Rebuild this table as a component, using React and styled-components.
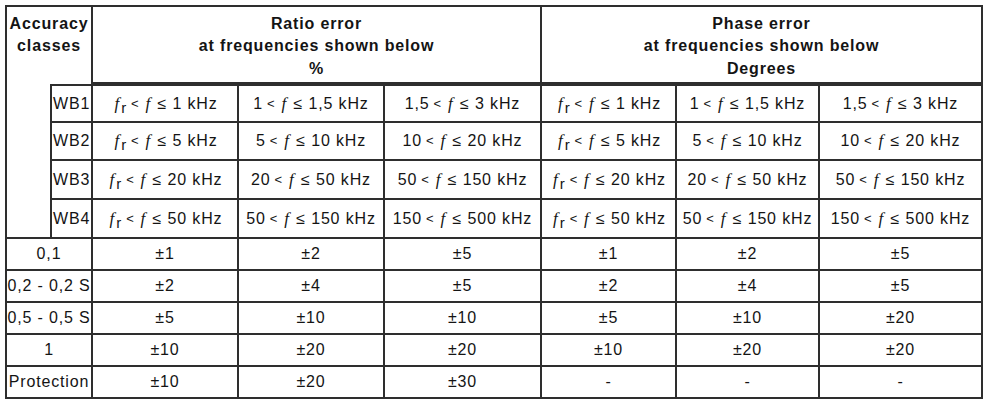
import React from "react";
import styled, { createGlobalStyle } from "styled-components";

const Global = createGlobalStyle`
  html, body { margin: 0; padding: 0; background: #ffffff; }
  body { font-family: "Liberation Sans", Arial, sans-serif; color: #141414; }
`;

const Page = styled.div`
  padding: 5px 0 0 5px;
`;

const Grid = styled.div`
  display: grid;
  width: max-content;
  grid-template-columns: 45px 41px 146px 146px 157px 135px 143px 163px;
  grid-template-rows: 77px 39px 38px 39px 39px repeat(5, 32px);
  border-left: 2px solid #2e2e2e;
  border-top: 2px solid #2e2e2e;
`;

const Cell = styled.div`
  box-sizing: border-box;
  grid-column: ${(p) => p.$col};
  grid-row: ${(p) => p.$row};
  border-right: 2px solid #2e2e2e;
  border-bottom: ${(p) => (p.$noBottom ? "none" : "2px solid #2e2e2e")};
  border-top: ${(p) => (p.$top ? "2px solid #2e2e2e" : "none")};
  display: flex;
  align-items: center;
  justify-content: ${(p) => (p.$left ? "flex-start" : "center")};
  padding-left: ${(p) => (p.$left ? "1px" : "0")};
  font-size: 16px;
  letter-spacing: 0.85px;
  white-space: pre;
  line-height: 20px;
`;

const HeadCell = styled(Cell)`
  flex-direction: column;
  justify-content: flex-start;
  align-items: center;
  padding-top: 6px;
  font-weight: bold;
  line-height: 22px;
`;

const Unit = styled.div`
  margin-top: 1px;
`;

const F = styled.span`
  display: inline-block;
  font-family: "Liberation Serif", "Times New Roman", serif;
  font-style: italic;
  font-size: 17px;
  letter-spacing: 0;
  padding: 0 2px 0 2px;
`;

const Sub = styled.span`
  display: inline-block;
  font-size: 15px;
  transform: translateY(4px);
`;

const Lt = styled.span`
  display: inline-block;
  font-size: 13px;
  padding: 0 4px;
`;

const Freq = ({ lo, hi }) => (
  <>
    {lo === "fr" ? (<><F>f</F><Sub>r</Sub></>) : lo}<Lt>&lt;</Lt><F>f</F>{` ≤ ${hi} kHz`}
  </>
);

const wbRows = [
  { name: "WB1", f: [["fr", "1"], ["1", "1,5"], ["1,5", "3"]] },
  { name: "WB2", f: [["fr", "5"], ["5", "10"], ["10", "20"]] },
  { name: "WB3", f: [["fr", "20"], ["20", "50"], ["50", "150"]] },
  { name: "WB4", f: [["fr", "50"], ["50", "150"], ["150", "500"]] },
];

const classRows = [
  { name: "0,1", v: ["±1", "±2", "±5", "±1", "±2", "±5"] },
  { name: "0,2 - 0,2 S", v: ["±2", "±4", "±5", "±2", "±4", "±5"] },
  { name: "0,5 - 0,5 S", v: ["±5", "±10", "±10", "±5", "±10", "±20"] },
  { name: "1", v: ["±10", "±20", "±20", "±10", "±20", "±20"] },
  { name: "Protection", v: ["±10", "±20", "±30", "-", "-", "-"] },
];

export default function App() {
  return (
    <Page>
      <Global />
      <Grid>
        <HeadCell $col="1 / 3" $row="1" $noBottom>
          <div>Accuracy</div>
          <div>classes</div>
        </HeadCell>
        <HeadCell $col="3 / 6" $row="1">
          <div>Ratio error</div>
          <div>at frequencies shown below</div>
          <Unit>%</Unit>
        </HeadCell>
        <HeadCell $col="6 / 9" $row="1">
          <div>Phase error</div>
          <div>at frequencies shown below</div>
          <Unit>Degrees</Unit>
        </HeadCell>
        <Cell $col="1" $row="2 / 6" />
        {wbRows.map((r, i) => (
          <React.Fragment key={r.name}>
            <Cell $col="2" $row={`${i + 2}`} $left $top={i === 0}>
              {r.name}
            </Cell>
            {[...r.f, ...r.f].map(([lo, hi], j) => (
              <Cell key={j} $col={`${j + 3}`} $row={`${i + 2}`} $top={i === 0}>
                <Freq lo={lo} hi={hi} />
              </Cell>
            ))}
          </React.Fragment>
        ))}
        {classRows.map((r, i) => (
          <React.Fragment key={r.name}>
            <Cell $col="1 / 3" $row={`${i + 6}`}>
              {r.name}
            </Cell>
            {r.v.map((v, j) => (
              <Cell key={j} $col={`${j + 3}`} $row={`${i + 6}`}>
                {v}
              </Cell>
            ))}
          </React.Fragment>
        ))}
      </Grid>
    </Page>
  );
}
